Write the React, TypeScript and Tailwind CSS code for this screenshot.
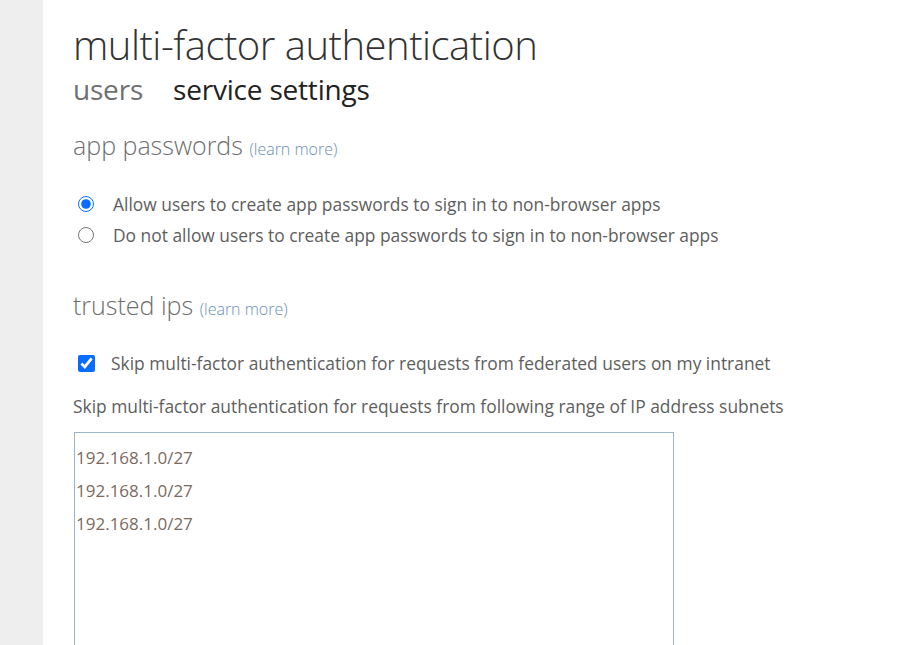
import { useState } from "react";

const ranges = ["192.168.1.0/27", "192.168.1.0/27", "192.168.1.0/27"];

export default function App() {
  const [allowApp, setAllowApp] = useState(true);
  const [skipFederated, setSkipFederated] = useState(true);

  return (
    <div
      className="flex h-[645px] w-[908px] overflow-hidden bg-white"
      style={{ fontFamily: '"Open Sans", "Noto Sans", sans-serif' }}
    >
      <div className="w-[43px] shrink-0 bg-[#eeeeee]" />
      <main className="flex-1 pl-[30px] pt-[23px]">
        <h1 className="text-[40px] font-light leading-[44px] tracking-[-0.5px] text-[#333333]">
          multi-factor authentication
        </h1>
        <nav className="mt-[6px] flex gap-[30px] text-[28px] leading-[32px] tracking-[-0.2px]">
          <span className="text-[#707070]">users</span>
          <span className="text-[#222222]">service settings</span>
        </nav>

        <h2 className="mt-[23px] text-[25px] font-light leading-[34px] text-[#6e6e6e]">
          app passwords{" "}
          <a className="text-[16px] text-[#6a8fb5]">(learn more)</a>
        </h2>

        <div className="mt-[26px] flex flex-col gap-[7px] text-[17.4px] leading-[24px] text-[#5e5e5e]">
          <label className="flex items-center gap-[19px] pl-[5px]">
            <input
              type="radio"
              name="app"
              checked={allowApp}
              onChange={() => setAllowApp(true)}
              className="h-[16px] w-[16px] accent-[#0a6cff]"
            />
            Allow users to create app passwords to sign in to non-browser apps
          </label>
          <label className="flex items-center gap-[19px] pl-[5px]">
            <input
              type="radio"
              name="app"
              checked={!allowApp}
              onChange={() => setAllowApp(false)}
              className="h-[16px] w-[16px] accent-[#0a6cff]"
            />
            Do not allow users to create app passwords to sign in to non-browser apps
          </label>
        </div>

        <h2 className="mt-[41px] text-[25px] font-light leading-[34px] text-[#6e6e6e]">
          trusted ips{" "}
          <a className="text-[16px] text-[#6a8fb5]">(learn more)</a>
        </h2>

        <label className="mt-[25px] flex items-center gap-[16px] pl-[5px] text-[17.4px] leading-[24px] text-[#5e5e5e]">
          <input
            type="checkbox"
            checked={skipFederated}
            onChange={(e) => setSkipFederated(e.target.checked)}
            className="h-[17px] w-[17px] accent-[#0a6cff]"
          />
          Skip multi-factor authentication for requests from federated users on my intranet
        </label>
        <p className="mt-[19px] text-[17.4px] leading-[24px] text-[#5e5e5e]">
          Skip multi-factor authentication for requests from following range of IP address subnets
        </p>

        <div className="mt-[14px] ml-px h-[260px] w-[600px] border border-[#9fb4c8] pl-[1px] pt-[8px] text-[17px] leading-[33px] text-[#7a6a5e]">
          {ranges.map((r, i) => (
            <div key={i}>{r}</div>
          ))}
        </div>
      </main>
    </div>
  );
}
